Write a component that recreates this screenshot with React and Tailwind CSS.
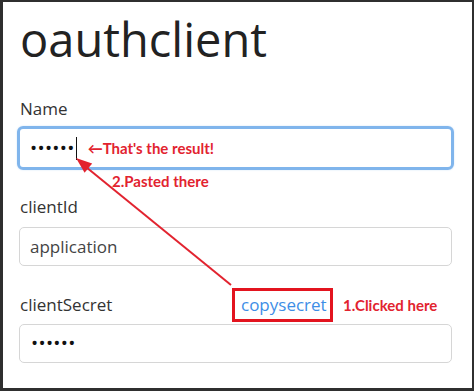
const sans = { fontFamily: '"Open Sans", "Noto Sans", sans-serif' };
const note = { fontFamily: 'Lato, "Liberation Sans", sans-serif' };

function Label({ children }) {
  return <div className="text-[17px] leading-[24px] text-[#333]">{children}</div>;
}

export default function App() {
  return (
    <div
      className="relative w-[474px] h-[391px] overflow-hidden bg-white border-t-2 border-l-[3px] border-r-2 border-b-[3px] border-[#2f2f2f] pl-4 pr-5 pt-[9px]"
      style={sans}
    >
      <h1 className="text-[47px] leading-[56px] text-[#222] pl-px">oauthclient</h1>

      <div className="mt-[30px] pl-px">
        <Label>Name</Label>
      </div>
      <div className="mt-[5px] -mx-[2px] h-[44px] flex items-center rounded-[6px] border-[3px] border-[#80b5ec] shadow-[0_0_2px_#cfe3f8] pl-[10px]">
        <span className="text-[19px] leading-none tracking-[0.3px] text-[#111]">••••••</span>
        <span className="w-px h-[23px] bg-[#111] ml-px" />
        <span className="ml-[11px] text-[15px] font-bold text-[#e2232f]" style={note}>
          ←That's the result!
        </span>
      </div>

      <div className="mt-[25px] pl-px">
        <Label>clientId</Label>
      </div>
      <div className="mt-2 h-[39px] flex items-center rounded-[5px] border border-[#d6d6d6] pl-[10px] text-[17px] text-[#444]">
        application
      </div>

      <div className="mt-[22px] h-[34px] flex items-center">
        <div className="w-[213px] pl-px">
          <Label>clientSecret</Label>
        </div>
        <div className="h-[34px] w-[101px] flex items-center border-[3px] border-[#e3141f] pl-[6px]">
          <span className="text-[17px] text-[#3d8ee6]">copysecret</span>
        </div>
        <span className="ml-[10px] text-[15px] font-bold text-[#e2232f]" style={note}>
          1.Clicked here
        </span>
      </div>
      <div className="mt-[2px] h-[39px] flex items-center rounded-[5px] border border-[#d6d6d6] pl-[11px]">
        <span className="text-[19px] leading-none tracking-[0.3px] text-[#111]">••••••</span>
      </div>

      <span
        className="absolute left-[109px] top-[169px] text-[15px] leading-[20px] font-bold text-[#e2232f]"
        style={note}
      >
        2.Pasted there
      </span>

      <svg className="absolute left-0 top-0 pointer-events-none" width="474" height="391" viewBox="3 2 474 391">
        <line x1="231" y1="285" x2="86" y2="167" stroke="#e2232f" strokeWidth="2" />
        <polygon points="76,158 92.2,163.4 84.6,172.8" fill="#e2232f" />
      </svg>
    </div>
  );
}
